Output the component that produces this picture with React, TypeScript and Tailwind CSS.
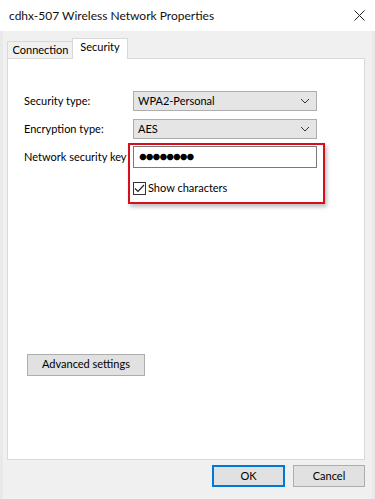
import React from "react";

const font = { fontFamily: 'Lato, "Noto Sans", sans-serif' };

function Chevron() {
  return (
    <svg width="10" height="6" viewBox="0 0 10 6" className="shrink-0">
      <path d="M1 1l4 4 4-4" fill="none" stroke="#333" strokeWidth="1" />
    </svg>
  );
}

function Select({ value }: { value: string }) {
  return (
    <div className="flex h-[20px] w-[184px] items-center justify-between border border-[#adadad] bg-[#e5e5e5] pl-[4px] pr-[6px] text-[11px] text-black">
      <span>{value}</span>
      <Chevron />
    </div>
  );
}

export default function App() {
  return (
    <div className="flex h-[499px] w-[375px] flex-col overflow-hidden bg-[#f0f0f0] text-black" style={font}>
      {/* Title bar */}
      <div className="flex h-[31px] shrink-0 items-center justify-between bg-white pl-[9px] pr-[10px]">
        <span className="text-[12px] text-[#111]">cdhx-507 Wireless Network Properties</span>
        <svg width="11" height="11" viewBox="0 0 11 11">
          <path d="M0.5 0.5l10 10M10.5 0.5l-10 10" stroke="#222" strokeWidth="1" />
        </svg>
      </div>

      <div className="flex flex-1 flex-col border-l-[3px] border-r-[3px] border-[#e9e9e9] pl-[4px] pr-[7px]">
        {/* Tabs */}
        <div className="mt-[7px] flex h-[20px] items-end">
          <div className="-mr-px flex h-[17px] w-[66px] items-center justify-center border border-b-0 border-[#d9d9d9] bg-[#f0f0f0] pl-[1px] text-[11px]">
            Connection
          </div>
          <div className="relative z-10 -mb-px flex h-[21px] w-[56px] items-center justify-center border border-b-0 border-[#d9d9d9] bg-white pb-[3px] text-[11px]">
            Security
          </div>
        </div>

        {/* Panel */}
        <div className="relative flex h-[402px] flex-col border border-[#d9d9d9] bg-white pl-[16px]">
          <div className="mt-[32px] flex flex-col">
            <div className="flex h-[20px] items-center">
              <span className="w-[109px] text-[11px]">Security type:</span>
              <Select value="WPA2-Personal" />
            </div>
            <div className="mt-[8px] flex h-[20px] items-center">
              <span className="w-[109px] text-[11px]">Encryption type:</span>
              <Select value="AES" />
            </div>
            <div className="mt-[7px] flex h-[22px] items-center">
              <span className="w-[109px] whitespace-nowrap text-[11px]">Network security key</span>
              <div className="flex h-[22px] w-[184px] items-center border border-[#7a7a7a] bg-white pl-[5px] text-[13px] font-bold tracking-[-1px]">
                ●●●●●●●●
              </div>
            </div>
            <div className="mt-[12px] flex items-center pl-[109px]">
              <div className="flex h-[13px] w-[13px] items-center justify-center border border-[#333] bg-white">
                <svg width="11" height="9" viewBox="0 0 11 9">
                  <path d="M1 4.5l3 3 6-6.5" fill="none" stroke="#222" strokeWidth="1.2" />
                </svg>
              </div>
              <span className="ml-[2px] text-[11px]">Show characters</span>
            </div>
          </div>

          {/* Highlight box */}
          <div className="absolute left-[120px] top-[84px] h-[61px] w-[197px] border-2 border-[#d3101c] shadow-[2px_3px_4px_rgba(0,0,0,0.25)]" />

          <div className="mt-[157px] pl-[3px]">
            <div className="flex h-[22px] w-[118px] items-center justify-center border border-[#adadad] bg-[#e1e1e1] text-[11px]">
              Advanced settings
            </div>
          </div>
        </div>

        {/* Buttons */}
        <div className="mt-[5px] flex justify-end gap-[8px] pr-[0px]">
          <div className="flex h-[22px] w-[73px] items-center justify-center border-2 border-[#0078d7] bg-[#e1e1e1] text-[11px]">
            OK
          </div>
          <div className="flex h-[22px] w-[72px] items-center justify-center border border-[#adadad] bg-[#e1e1e1] text-[11px]">
            Cancel
          </div>
        </div>
      </div>
    </div>
  );
}
